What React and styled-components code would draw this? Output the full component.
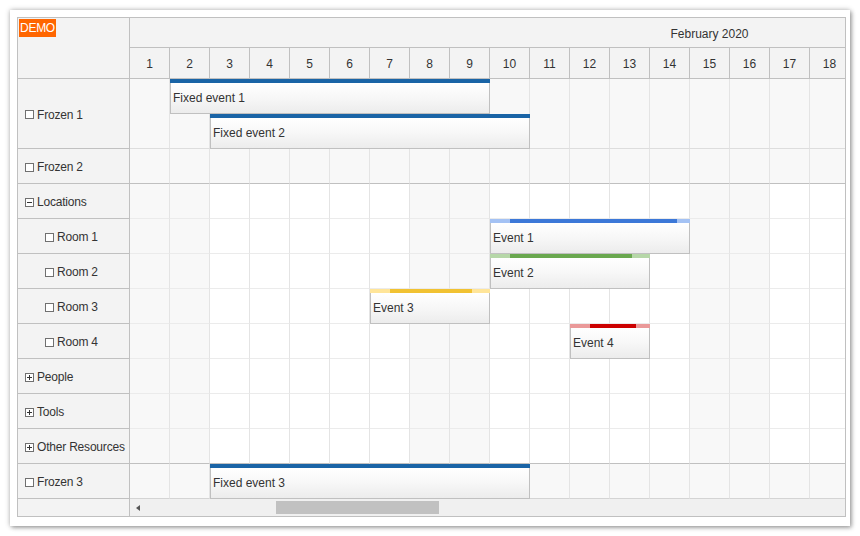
import React from "react";
import styled, { createGlobalStyle } from "styled-components";

const GlobalStyle = createGlobalStyle`
  html, body { margin: 0; padding: 0; background: #ffffff; }
  body {
    font-family: "Liberation Sans", Arial, sans-serif;
    font-size: 12px;
    color: #333333;
  }
  * { box-sizing: border-box; }
`;

const DAY_W = 40;
const DAYS = 18;
const WEEKEND = new Set([1, 2, 8, 9, 15, 16]);

const Page = styled.div`
  padding: 10px;
`;

const Panel = styled.div`
  width: 840px;
  height: 516px;
  background: #ffffff;
  padding: 7px 4px 9px 7px;
  box-shadow: 0 0 5px rgba(0, 0, 0, 0.3), 2px 2px 4px rgba(0, 0, 0, 0.25);
`;

const Scheduler = styled.div`
  width: 829px;
  border: 1px solid #c0c0c0;
  display: flex;
  flex-direction: column;
  overflow: hidden;
`;

const HeaderBand = styled.div`
  display: flex;
  height: 61px;
`;

const Corner = styled.div`
  position: relative;
  width: 112px;
  flex-shrink: 0;
  background: #f3f3f3;
  border-right: 1px solid #c0c0c0;
  border-bottom: 1px solid #c0c0c0;
`;

const DemoBadge = styled.div`
  position: absolute;
  left: 1px;
  top: 1px;
  height: 18px;
  width: 37px;
  line-height: 18px;
  text-align: center;
  background: #ff6600;
  color: #ffffff;
  font-size: 12px;
  letter-spacing: -0.3px;
`;

const TimeHeader = styled.div`
  flex: 1;
  overflow: hidden;
  background: #f3f3f3;
  display: flex;
  flex-direction: column;
`;

const MonthCell = styled.div`
  width: ${DAY_W * 29}px;
  height: 30px;
  flex-shrink: 0;
  border-bottom: 1px solid #c0c0c0;
  border-right: 1px solid #c0c0c0;
  display: flex;
  align-items: center;
  justify-content: center;
  padding-top: 3px;
`;

const DayRow = styled.div`
  display: flex;
  height: 31px;
  border-bottom: 1px solid #c0c0c0;
`;

const DayCell = styled.div`
  width: ${DAY_W}px;
  flex-shrink: 0;
  border-right: 1px solid #c0c0c0;
  display: flex;
  align-items: center;
  justify-content: center;
  padding-top: 2px;
`;

const Row = styled.div`
  display: flex;
  height: ${(p) => p.$h}px;
`;

const RowHeader = styled.div`
  width: 112px;
  flex-shrink: 0;
  background: #f3f3f3;
  border-right: 1px solid #c0c0c0;
  border-bottom: 1px solid #c0c0c0;
  display: flex;
  align-items: center;
  padding-left: ${(p) => 7 + p.$indent * 20}px;
  padding-top: 2px;
  white-space: nowrap;
  letter-spacing: -0.2px;
`;

const IconBox = styled.span`
  position: relative;
  width: 9px;
  height: 9px;
  border: 1px solid #707070;
  margin-right: 3px;
  flex-shrink: 0;
  background: #ffffff;

  &::before, &::after {
    content: "";
    position: absolute;
    background: #333333;
    display: ${(p) => (p.$kind === "box" ? "none" : "block")};
  }
  &::before {
    left: 1px;
    top: 3px;
    width: 5px;
    height: 1px;
  }
  &::after {
    left: 3px;
    top: 1px;
    width: 1px;
    height: 5px;
    display: ${(p) => (p.$kind === "plus" ? "block" : "none")};
  }
`;

const Lane = styled.div`
  flex: 1;
  position: relative;
  overflow: hidden;
  display: flex;
`;

const Cell = styled.div`
  width: ${DAY_W}px;
  flex-shrink: 0;
  background: ${(p) => (p.$shade ? "#f8f8f8" : "#ffffff")};
  border-right: 1px solid #e4e4e4;
  border-bottom: 1px solid ${(p) => p.$line};
`;

const EventBox = styled.div`
  position: absolute;
  height: 35px;
  display: flex;
  flex-direction: column;
`;

const EventBar = styled.div`
  position: relative;
  height: 4px;
  flex-shrink: 0;
  background: ${(p) => p.$light};
`;

const EventProgress = styled.div`
  position: absolute;
  top: 0;
  height: 4px;
  background: ${(p) => p.$dark};
`;

const EventBody = styled.div`
  flex: 1;
  border: 1px solid #c0c0c0;
  border-top: 0;
  background: linear-gradient(to bottom, #ffffff 0%, #f7f7f7 50%, #ececec 100%);
  display: flex;
  align-items: center;
  padding-left: 2px;
  white-space: nowrap;
  overflow: hidden;
`;

const ScrollRow = styled.div`
  display: flex;
  height: 17px;
`;

const ScrollCorner = styled.div`
  width: 112px;
  flex-shrink: 0;
  background: #f3f3f3;
  border-right: 1px solid #c0c0c0;
`;

const ScrollTrack = styled.div`
  flex: 1;
  background: #f0f0f0;
  display: flex;
  align-items: center;
`;

const ScrollArrow = styled.div`
  width: 0;
  height: 0;
  margin-left: 6px;
  border-top: 3.5px solid transparent;
  border-bottom: 3.5px solid transparent;
  border-right: 4px solid #555555;
`;

const ScrollThumb = styled.div`
  width: 163px;
  height: 13px;
  margin-left: 136px;
  background: #c1c1c1;
`;

const FIXED = { light: "#1a64a6", dark: "#1a64a6" };

const rows = [
  { name: "Frozen 1", icon: "box", indent: 0, h: 70, frozen: true, line: "#dddddd" },
  { name: "Frozen 2", icon: "box", indent: 0, h: 35, frozen: true, line: "#c0c0c0" },
  { name: "Locations", icon: "minus", indent: 0, h: 35, line: "#ebebeb" },
  { name: "Room 1", icon: "box", indent: 1, h: 35, line: "#ebebeb" },
  { name: "Room 2", icon: "box", indent: 1, h: 35, line: "#ebebeb" },
  { name: "Room 3", icon: "box", indent: 1, h: 35, line: "#ebebeb" },
  { name: "Room 4", icon: "box", indent: 1, h: 35, line: "#ebebeb" },
  { name: "People", icon: "plus", indent: 0, h: 35, line: "#ebebeb" },
  { name: "Tools", icon: "plus", indent: 0, h: 35, line: "#ebebeb" },
  { name: "Other Resources", icon: "plus", indent: 0, h: 35, line: "#c0c0c0" },
  { name: "Frozen 3", icon: "box", indent: 0, h: 35, frozen: true, line: "#d4d4d4" },
];

const events = {
  "Frozen 1": [
    { text: "Fixed event 1", start: 2, days: 8, top: 0, ...FIXED, pl: 0, pw: 320 },
    { text: "Fixed event 2", start: 3, days: 8, top: 35, ...FIXED, pl: 0, pw: 320 },
  ],
  "Room 1": [
    { text: "Event 1", start: 10, days: 5, top: 0, light: "#a4c2f4", dark: "#3c78d8", pl: 20, pw: 167 },
  ],
  "Room 2": [
    { text: "Event 2", start: 10, days: 4, top: 0, light: "#b6d7a8", dark: "#6aa84f", pl: 20, pw: 122 },
  ],
  "Room 3": [
    { text: "Event 3", start: 7, days: 3, top: 0, light: "#ffe599", dark: "#f1c232", pl: 20, pw: 82 },
  ],
  "Room 4": [
    { text: "Event 4", start: 12, days: 2, top: 0, light: "#ea9999", dark: "#cc0000", pl: 20, pw: 46 },
  ],
  "Frozen 3": [
    { text: "Fixed event 3", start: 3, days: 8, top: 0, ...FIXED, pl: 0, pw: 320 },
  ],
};

const dayList = Array.from({ length: DAYS }, (_, i) => i + 1);

function Event({ ev }) {
  return (
    <EventBox
      style={{
        left: (ev.start - 1) * DAY_W,
        width: ev.days * DAY_W,
        top: ev.top,
      }}
    >
      <EventBar $light={ev.light}>
        <EventProgress $dark={ev.dark} style={{ left: ev.pl, width: ev.pw }} />
      </EventBar>
      <EventBody>{ev.text}</EventBody>
    </EventBox>
  );
}

export default function App() {
  return (
    <Page>
      <GlobalStyle />
      <Panel>
        <Scheduler>
          <HeaderBand>
            <Corner>
              <DemoBadge>DEMO</DemoBadge>
            </Corner>
            <TimeHeader>
              <MonthCell>February 2020</MonthCell>
              <DayRow>
                {dayList.map((d) => (
                  <DayCell key={d}>{d}</DayCell>
                ))}
              </DayRow>
            </TimeHeader>
          </HeaderBand>

          {rows.map((r) => (
            <Row key={r.name} $h={r.h}>
              <RowHeader $indent={r.indent}>
                <IconBox $kind={r.icon} />
                {r.name}
              </RowHeader>
              <Lane>
                {dayList.map((d) => (
                  <Cell key={d} $shade={r.frozen || WEEKEND.has(d)} $line={r.line} />
                ))}
                {(events[r.name] || []).map((ev) => (
                  <Event key={ev.text} ev={ev} />
                ))}
              </Lane>
            </Row>
          ))}

          <ScrollRow>
            <ScrollCorner />
            <ScrollTrack>
              <ScrollArrow />
              <ScrollThumb />
            </ScrollTrack>
          </ScrollRow>
        </Scheduler>
      </Panel>
    </Page>
  );
}
